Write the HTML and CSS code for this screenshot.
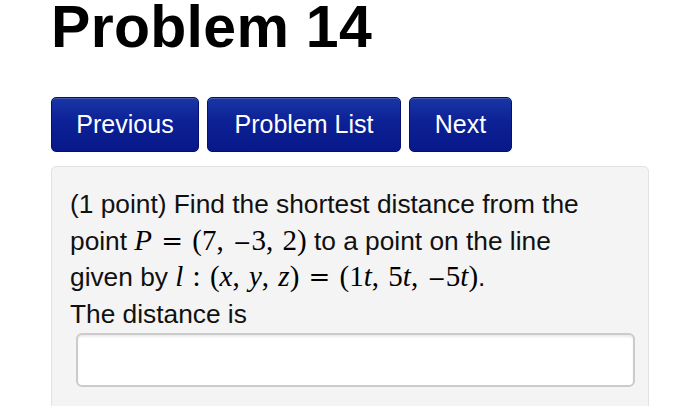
FILE: index.html
```html
<!DOCTYPE html>
<html lang="en">
<head>
<meta charset="utf-8">
<title>Problem 14</title>
<link rel="stylesheet" href="styles.css">
</head>
<body>
<div class="page">
  <h1 class="title">Problem 14</h1>
  <nav class="nav">
    <a class="btn btn-prev" href="#">Previous</a>
    <a class="btn btn-list" href="#">Problem List</a>
    <a class="btn btn-next" href="#">Next</a>
  </nav>
  <div class="problem">
    <p class="text">(1 point) Find the shortest distance from the point <span class="m"><i>P</i> <span class="op">=</span> (7, <span class="neg">&minus;</span>3, 2)</span> to a point on the line given by <span class="m"><i>l</i><span class="rel">:</span>(<i>x</i>, <i>y</i>, <i>z</i>) <span class="op">=</span> (1<i>t</i>, 5<i>t</i>, <span class="neg">&minus;</span>5<i>t</i>)</span>.<br>The distance is</p>
    <input class="answer" type="text" aria-label="answer">
  </div>
</div>
</body>
</html>
```

FILE: styles.css
```css
html, body {
  margin: 0;
  padding: 0;
  background: #ffffff;
  overflow: hidden;
}

.page {
  padding: 2px 0 0 51px;
  font-family: "Liberation Sans", Arial, sans-serif;
  color: #111;
}

.title {
  margin: 0;
  font-size: 59px;
  line-height: 50px;
  letter-spacing: 0.3px;
  font-weight: bold;
  color: #000;
}

.nav {
  display: flex;
  gap: 8px;
  margin-top: 45px;
}

.btn {
  display: flex;
  align-items: center;
  justify-content: center;
  height: 53px;
  box-sizing: content-box;
  border: 1px solid #06106a;
  border-radius: 5px;
  background: linear-gradient(#1936a4, #0c2196 45%, #081888);
  box-shadow: inset 0 1px 0 rgba(255, 255, 255, 0.18);
  color: #fff;
  font-size: 25px;
  text-decoration: none;
}

.btn-prev { width: 146px; }
.btn-list { width: 192px; }
.btn-next { width: 101px; }

.problem {
  margin-top: 14px;
  width: 598px;
  height: 260px;
  border: 1px solid #e2e2e2;
  border-radius: 5px;
  background: #f4f4f4;
  padding: 19px 60px 0 18px;
  box-sizing: border-box;
}

.text {
  margin: 0;
  font-size: 26.3px;
  line-height: 36.7px;
  color: #111;
}

/* inline formulas set in a serif face */
.m {
  font-family: "Liberation Serif", "Times New Roman", serif;
  font-size: 29px;
  line-height: 1;
  word-spacing: 2px;
  white-space: nowrap;
  color: #000;
}

.m i {
  font-style: italic;
}

/* wide relation and minus signs */
.op {
  font-family: "DejaVu Serif", serif;
  font-size: 26px;
}

.rel {
  padding: 0 0.32em;
}

.neg {
  font-family: "DejaVu Serif", serif;
  font-size: 22px;
}

.answer {
  display: block;
  margin: 0 0 0 6px;
  width: 559px;
  height: 54px;
  box-sizing: border-box;
  border: 2px solid #cbcbcb;
  border-radius: 6px;
  background: #fff;
  box-shadow: inset 0 2px 2px rgba(0, 0, 0, 0.08);
  outline: none;
}
```
